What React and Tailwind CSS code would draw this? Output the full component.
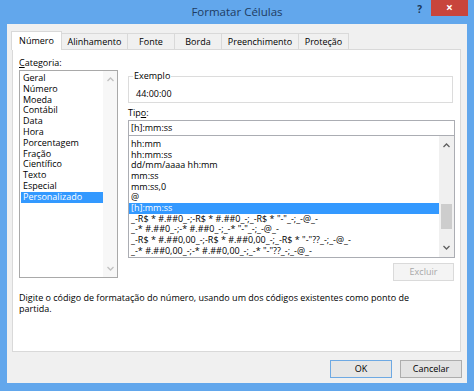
import React from "react";

const font = "font-['Open_Sans','Noto_Sans',sans-serif]";

function Chevron({ dir = "up", color = "#606060" }) {
  return (
    <svg width="7" height="5" viewBox="0 0 7 5">
      {dir === "up" ? (
        <polyline points="0.5,4 3.5,1 6.5,4" fill="none" stroke={color} strokeWidth="1.3" />
      ) : (
        <polyline points="0.5,1 3.5,4 6.5,1" fill="none" stroke={color} strokeWidth="1.3" />
      )}
    </svg>
  );
}

const categories = [
  "Geral",
  "Número",
  "Moeda",
  "Contábil",
  "Data",
  "Hora",
  "Porcentagem",
  "Fração",
  "Científico",
  "Texto",
  "Especial",
  "Personalizado",
];

const tipos = [
  "hh:mm",
  "hh:mm:ss",
  "dd/mm/aaaa hh:mm",
  "mm:ss",
  "mm:ss,0",
  "@",
  "[h]:mm:ss",
  '_-R$ * #.##0_-;-R$ * #.##0_-;_-R$ * "-"_-;_-@_-',
  '_-* #.##0_-;-* #.##0_-;_-* "-"_-;_-@_-',
  '_-R$ * #.##0,00_-;-R$ * #.##0,00_-;_-R$ * "-"??_-;_-@_-',
  '_-* #.##0,00_-;-* #.##0,00_-;_-* "-"??_-;_-@_-',
];

const tabs = [
  { label: "Número", w: "w-[51px]", active: true },
  { label: "Alinhamento", w: "w-[66px]" },
  { label: "Fonte", w: "w-[47px]" },
  { label: "Borda", w: "w-[47px]" },
  { label: "Preenchimento", w: "w-[77px]" },
  { label: "Proteção", w: "w-[50px]" },
];

export default function App() {
  return (
    <div className={`w-[474px] h-[391px] bg-[#62a7ec] flex flex-col overflow-hidden ${font}`}>
      {/* Title bar */}
      <div className="h-[24px] shrink-0 grid grid-cols-[1fr_auto_1fr]">
        <div />
        <div className="flex items-center pt-[0px] text-[11.5px] text-[#1e3c62]">Formatar Células</div>
        <div className="flex justify-end items-start">
          <span className="mt-[2px] mr-[9px] text-[10px] font-bold text-[#1a3658] leading-[14px]">?</span>
          <div className="w-[37px] h-[16px] mr-[6px] bg-[#c8453c] flex items-center justify-center text-white text-[12px] leading-none font-bold">
            ×
          </div>
        </div>
      </div>

      {/* Client area */}
      <div className="mx-[7px] mb-[8px] flex-1 bg-[#f0f0f0] flex flex-col text-[9px] text-black">
        {/* Tabs */}
        <div className="flex items-end pl-[4px] pt-[6px] h-[25px] relative z-10">
          {tabs.map((t) =>
            t.active ? (
              <div
                key={t.label}
                className={`${t.w} h-[19px] mb-[-1px] bg-white border border-b-0 border-[#d9d9d9] flex items-center justify-center pb-[1px] text-black`}
              >
                {t.label}
              </div>
            ) : (
              <div
                key={t.label}
                className={`${t.w} h-[16px] bg-[#f0f0f0] border border-l-0 border-b-0 border-[#d9d9d9] flex items-center justify-center text-black`}
              >
                {t.label}
              </div>
            )
          )}
        </div>

        {/* Panel */}
        <div className="ml-[5px] mr-[6px] h-[303px] bg-white border border-[#d9d9d9] flex flex-col pl-[6px] pr-[5px] pt-[7px]">
          <div className="flex">
            {/* Left column */}
            <div className="w-[99px] flex flex-col">
              <div className="h-[12px] leading-[12px]">
                <span className="underline">C</span>ategoria:
              </div>
              <div className="mt-[1px] h-[208px] border border-[#a9a9a9] flex">
                <div className="flex-1 pt-[2px] pl-[1px]">
                  {categories.map((c) => (
                    <div
                      key={c}
                      className={`h-[10.8px] leading-[10.8px] pl-[2px] whitespace-nowrap ${
                        c === "Personalizado" ? "bg-[#3399ff] text-white" : ""
                      }`}
                    >
                      {c}
                    </div>
                  ))}
                </div>
                <div className="w-[14px] bg-[#f7f7f7] flex flex-col items-center justify-between py-[6px]">
                  <Chevron dir="up" color="#c2c2c2" />
                  <Chevron dir="down" color="#c2c2c2" />
                </div>
              </div>
            </div>

            {/* Right column */}
            <div className="ml-[10px] w-[327px] flex flex-col">
              <div className="mt-[19px] relative h-[27px] border border-[#dcdcdc] mr-[2px]">
                <span className="absolute left-[4px] top-[-7px] bg-white px-[1px] leading-[12px]">Exemplo</span>
                <div className="pl-[7px] pt-[11px] leading-[11px]">44:00:00</div>
              </div>
              <div className="mt-[4px] h-[12px] leading-[12px]">
                Tip<span className="underline">o</span>:
              </div>
              <div className="mt-[1px] h-[16px] border border-[#abadb3] flex items-center pl-[2px]">[h]:mm:ss</div>
              <div className="mt-[-1px] h-[123px] border border-[#abadb3] flex overflow-hidden">
                <div className="flex-1 pt-[3px] overflow-hidden">
                  {tipos.map((t, i) => (
                    <div
                      key={i}
                      className={`h-[10.67px] leading-[10.67px] pl-[2px] whitespace-pre ${
                        t === "[h]:mm:ss" ? "bg-[#3399ff] text-white" : ""
                      }`}
                    >
                      {t}
                    </div>
                  ))}
                </div>
                <div className="w-[15px] bg-[#f0f0f0] flex flex-col items-center py-[7px]">
                  <Chevron dir="up" />
                  <div className="mt-[56px] w-[11px] h-[25px] bg-[#cdcdcd]" />
                  <div className="mt-auto">
                    <Chevron dir="down" />
                  </div>
                </div>
              </div>
              <div className="mt-[5px] self-end mr-[1px] w-[61px] h-[18px] bg-[#f4f4f4] border border-[#dadada] flex items-center justify-center text-[#a8a8a8]">
                Excluir
              </div>
            </div>
          </div>

          <div className="mt-[11px] leading-[11px]">
            Digite o código de formatação do número, usando um dos códigos existentes como ponto de
            <br />
            partida.
          </div>
        </div>

        {/* Buttons */}
        <div className="flex justify-end gap-[8px] mt-[8px] mr-[5px]">
          <div className="w-[62px] h-[18px] bg-[#e6e6e6] border border-[#6ea9e3] flex items-center justify-center">
            OK
          </div>
          <div className="w-[62px] h-[18px] bg-[#e3e3e3] border border-[#adadad] flex items-center justify-center">
            Cancelar
          </div>
        </div>
      </div>
    </div>
  );
}
